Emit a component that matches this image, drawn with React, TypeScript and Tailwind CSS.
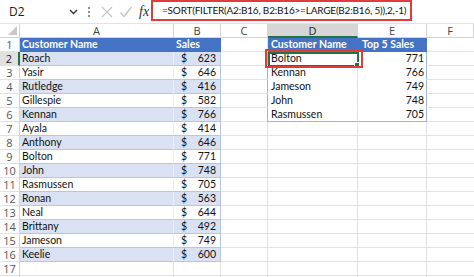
import React from "react";

const left: [string, number][] = [
  ["Roach", 623], ["Yasir", 646], ["Rutledge", 416], ["Gillespie", 582], ["Kennan", 766],
  ["Ayala", 414], ["Anthony", 646], ["Bolton", 771], ["John", 748], ["Rasmussen", 705],
  ["Ronan", 563], ["Neal", 644], ["Brittany", 492], ["Jameson", 749], ["Keelie", 600],
];
const right: [string, number][] = [
  ["Bolton", 771], ["Kennan", 766], ["Jameson", 749], ["John", 748], ["Rasmussen", 705],
];

const GRID = "grid grid-cols-[20px_154px_47px_47px_90px_69px_1fr]";
const cellBase = "h-[14px] border-r border-b border-[#e2e2e2] box-border overflow-hidden whitespace-nowrap leading-[13px]";

function RowHeader({ n }: { n: number }) {
  const sel = n === 2;
  return (
    <div
      className={`h-[14px] box-border border-b border-[#e2e2e2] text-center text-[11px] leading-[13px] ${
        sel ? "bg-[#e1e1e1] text-[#222] border-r-2 border-r-[#217346]" : "bg-white text-[#555] border-r border-r-[#d4d4d4]"
      }`}
      style={{ fontFamily: "'Open Sans', sans-serif" }}
    >
      {n <= 17 ? n : ""}
    </div>
  );
}

export default function App() {
  const rows = [];
  for (let r = 1; r <= 18; r++) {
    const cells: React.ReactNode[] = [<RowHeader key="h" n={r} />];
    if (r === 1) {
      cells.push(
        <div key="a" className={`${cellBase} bg-[#4472c4] text-white font-bold pl-[2px] border-r-[#4472c4] border-b-[#4472c4]`}>Customer Name</div>,
        <div key="b" className={`${cellBase} bg-[#4472c4] text-white font-bold pl-[2px] border-r-[#4472c4] border-b-[#4472c4]`}>Sales</div>
      );
    } else if (r <= 16) {
      const [name, v] = left[r - 2];
      const band = r % 2 === 0 ? "bg-[#d9e1f2]" : "bg-white";
      cells.push(
        <div key="a" className={`${cellBase} ${band} text-[#111] pl-[2px] border-r-[#e9edf5] border-b-[#b4c6e7]`}>{name}</div>,
        <div key="b" className={`${cellBase} ${band} text-[#111] flex justify-between pl-[7px] pr-[4px] border-r-[#b4c6e7] border-b-[#b4c6e7]`}>
          <span>$</span>
          <span>{v}</span>
        </div>
      );
    } else {
      cells.push(<div key="a" className={cellBase} />, <div key="b" className={cellBase} />);
    }
    cells.push(<div key="c" className={cellBase} />);
    if (r === 1) {
      cells.push(
        <div key="d" className={`${cellBase} bg-[#4472c4] text-white font-bold pl-[3px] border-r-[#4472c4] border-b-[#4472c4]`}>Customer Name</div>,
        <div key="e" className={`${cellBase} bg-[#4472c4] text-white font-bold pl-[4px] border-r-[#4472c4] border-b-[#4472c4]`}>Top 5 Sales</div>
      );
    } else if (r <= 6) {
      const [name, v] = right[r - 2];
      const last = r === 6;
      cells.push(
        <div key="d" className={`${cellBase} bg-white text-[#111] pl-[3px] border-l border-l-[#9fb3dd] border-r-[#e2e2e2] ${last ? "border-b-[#9fb3dd]" : "border-b-white"} -ml-px`}>{name}</div>,
        <div key="e" className={`${cellBase} bg-white text-[#111] text-right pr-[2px] border-r-[#9fb3dd] ${last ? "border-b-[#9fb3dd]" : "border-b-white"}`}>{v}</div>
      );
    } else {
      cells.push(<div key="d" className={cellBase} />, <div key="e" className={cellBase} />);
    }
    cells.push(<div key="f" className={`${cellBase} border-r-0`} />);
    rows.push(
      <div key={r} className={GRID}>
        {cells}
      </div>
    );
  }

  const colHead = (label: string, sel = false) => (
    <div
      className={`h-[14px] box-border border-r border-[#d4d4d4] text-center text-[11px] leading-[13px] ${
        sel ? "bg-[#d6d6d6] text-[#222] border-b-2 border-b-[#217346]" : "bg-white text-[#444] border-b border-b-[#d4d4d4]"
      }`}
      style={{ fontFamily: "'Open Sans', sans-serif" }}
    >
      {label}
    </div>
  );

  return (
    <div className="w-[474px] h-[277px] overflow-hidden bg-white relative" style={{ fontFamily: "Lato, 'Liberation Sans', sans-serif" }}>
      <div className="h-[23px] flex items-center bg-white relative">
        <div className="w-[82px] h-[20px] flex items-center justify-between pl-[9px] pr-[4px] text-[12px] text-[#222]" style={{ fontFamily: "'Open Sans', sans-serif" }}>
          <span>D2</span>
          <svg width="9" height="6" viewBox="0 0 9 6" fill="none" stroke="#333" strokeWidth="1.4">
            <path d="M1 1l3.5 3.5L8 1" />
          </svg>
        </div>
        <div className="w-[12px] flex flex-col items-center gap-[2px] ml-[1px]">
          <span className="w-[2px] h-[2px] bg-[#666] rounded-full" />
          <span className="w-[2px] h-[2px] bg-[#666] rounded-full" />
          <span className="w-[2px] h-[2px] bg-[#666] rounded-full" />
        </div>
        <svg className="ml-[5px]" width="14" height="14" viewBox="0 0 14 14" fill="none" stroke="#c4c4c4" strokeWidth="1.3">
          <path d="M2 2l10 10M12 2L2 12" />
        </svg>
        <svg className="ml-[5px]" width="14" height="14" viewBox="0 0 14 14" fill="none" stroke="#c4c4c4" strokeWidth="1.3">
          <path d="M1.5 7.5l3.5 4L12.5 2" />
        </svg>
        <span className="ml-[6px] text-[14px] italic text-[#333] leading-none" style={{ fontFamily: "'Liberation Serif', serif" }}>fx</span>
        <div
          className="absolute left-[151px] top-0 w-[261px] h-[21px] border-2 border-[#e23b3b] box-border flex items-center pl-[9px] text-[10px] tracking-[-0.2px] text-[#111] whitespace-nowrap overflow-hidden"
          style={{ fontFamily: "Lato, sans-serif" }}
        >
          =SORT(FILTER(A2:B16, B2:B16&gt;=LARGE(B2:B16, 5)),2,-1)
        </div>
      </div>
      <div className="h-px bg-[#e2e2e2]" />
      <div className={GRID}>
        <div className="h-[14px] box-border border-r border-b border-[#d4d4d4] bg-white relative">
          <svg className="absolute right-[2px] bottom-[2px]" width="9" height="9" viewBox="0 0 9 9">
            <path d="M9 0V9H0Z" fill="#c8c8c8" />
          </svg>
        </div>
        {colHead("A")}
        {colHead("B")}
        {colHead("C")}
        {colHead("D", true)}
        {colHead("E")}
        {colHead("F")}
      </div>
      <div className="text-[10.5px]">{rows}</div>
      <div className="absolute left-[268px] top-[52px] w-[91px] h-[15px] border-2 border-[#217346] box-border pointer-events-none">
        <div className="absolute -right-[3px] -bottom-[3px] w-[4px] h-[4px] bg-[#217346] border border-white box-content" />
      </div>
      <div className="absolute left-[265px] top-[49px] w-[98px] h-[19px] border-2 border-[#e23b3b] box-border pointer-events-none" />
    </div>
  );
}
